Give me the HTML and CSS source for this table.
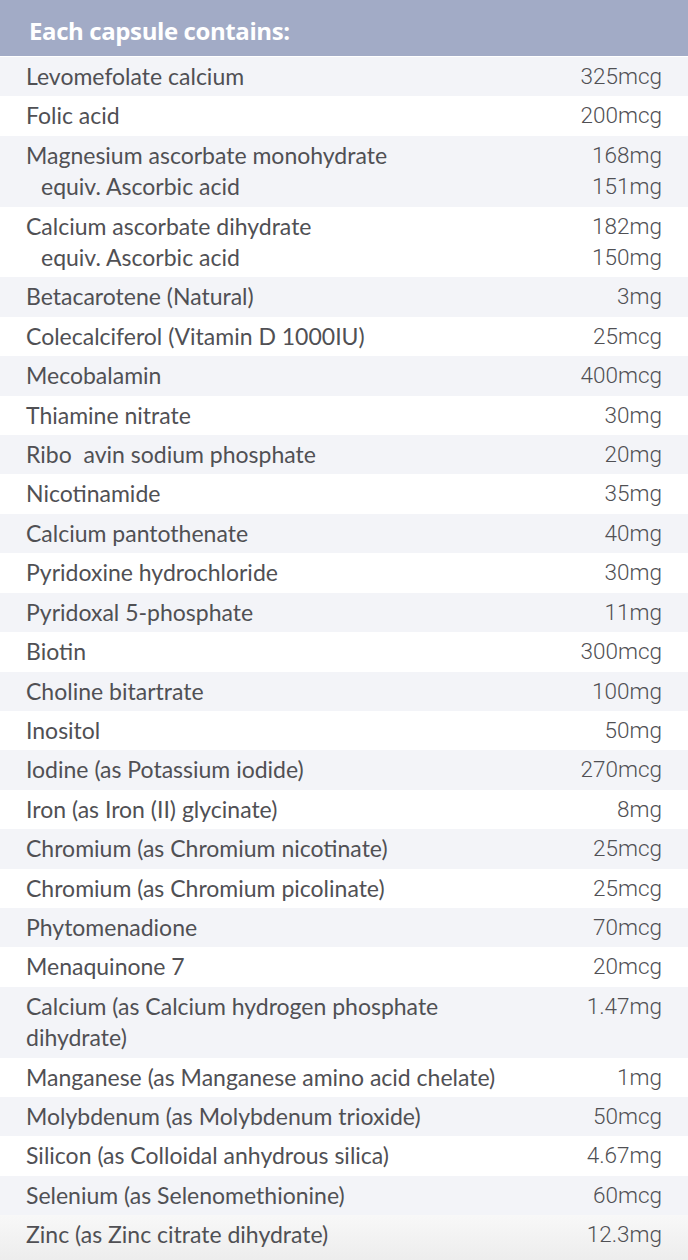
FILE: index.html
```html
<!DOCTYPE html>
<html>
<head>
<meta charset="utf-8">
<link rel="stylesheet" href="styles.css">
</head>
<body>
<div class="panel">
  <div class="header">Each capsule contains:</div>
  <div class="rows">
    <div class="row alt"><div class="name">Levomefolate calcium</div><div class="amt">325mcg</div></div>
    <div class="row"><div class="name">Folic acid</div><div class="amt">200mcg</div></div>
    <div class="row alt"><div class="name">Magnesium ascorbate monohydrate<br><span class="sub">equiv. Ascorbic acid</span></div><div class="amt">168mg<br>151mg</div></div>
    <div class="row"><div class="name">Calcium ascorbate dihydrate<br><span class="sub">equiv. Ascorbic acid</span></div><div class="amt">182mg<br>150mg</div></div>
    <div class="row alt"><div class="name">Betacarotene (Natural)</div><div class="amt">3mg</div></div>
    <div class="row"><div class="name">Colecalciferol (Vitamin D 1000IU)</div><div class="amt">25mcg</div></div>
    <div class="row alt"><div class="name">Mecobalamin</div><div class="amt">400mcg</div></div>
    <div class="row"><div class="name">Thiamine nitrate</div><div class="amt">30mg</div></div>
    <div class="row alt"><div class="name">Ribo&nbsp; avin sodium phosphate</div><div class="amt">20mg</div></div>
    <div class="row"><div class="name">Nicotinamide</div><div class="amt">35mg</div></div>
    <div class="row alt"><div class="name">Calcium pantothenate</div><div class="amt">40mg</div></div>
    <div class="row"><div class="name">Pyridoxine hydrochloride</div><div class="amt">30mg</div></div>
    <div class="row alt"><div class="name">Pyridoxal 5-phosphate</div><div class="amt">11mg</div></div>
    <div class="row"><div class="name">Biotin</div><div class="amt">300mcg</div></div>
    <div class="row alt"><div class="name">Choline bitartrate</div><div class="amt">100mg</div></div>
    <div class="row"><div class="name">Inositol</div><div class="amt">50mg</div></div>
    <div class="row alt"><div class="name">Iodine (as Potassium iodide)</div><div class="amt">270mcg</div></div>
    <div class="row"><div class="name">Iron (as Iron (II) glycinate)</div><div class="amt">8mg</div></div>
    <div class="row alt"><div class="name">Chromium (as Chromium nicotinate)</div><div class="amt">25mcg</div></div>
    <div class="row"><div class="name">Chromium (as Chromium picolinate)</div><div class="amt">25mcg</div></div>
    <div class="row alt"><div class="name">Phytomenadione</div><div class="amt">70mcg</div></div>
    <div class="row"><div class="name">Menaquinone 7</div><div class="amt">20mcg</div></div>
    <div class="row alt"><div class="name">Calcium (as Calcium hydrogen phosphate<br>dihydrate)</div><div class="amt">1.47mg</div></div>
    <div class="row"><div class="name">Manganese (as Manganese amino acid chelate)</div><div class="amt">1mg</div></div>
    <div class="row alt"><div class="name">Molybdenum (as Molybdenum trioxide)</div><div class="amt">50mcg</div></div>
    <div class="row"><div class="name">Silicon (as Colloidal anhydrous silica)</div><div class="amt">4.67mg</div></div>
    <div class="row alt"><div class="name">Selenium (as Selenomethionine)</div><div class="amt">60mcg</div></div>
    <div class="row last"><div class="name">Zinc (as Zinc citrate dihydrate)</div><div class="amt">12.3mg</div></div>
  </div>
</div>
</body>
</html>
```
FILE: styles.css
```css
html, body {
  margin: 0;
  padding: 0;
  background: #ffffff;
}
.panel {
  width: 688px;
  height: 1260px;
  overflow: hidden;
  font-family: "Lato", "Liberation Sans", sans-serif;
  color: #505054;
}
.header {
  height: 56px;
  background: #a2abc6;
  color: #ffffff;
  font-family: "Open Sans", "Liberation Sans", sans-serif;
  font-weight: 700;
  font-size: 24px;
  letter-spacing: -0.4px;
  line-height: 61px;
  padding-left: 29px;
  border-bottom: 1px solid #ffffff;
}
.rows {
  display: flex;
  flex-direction: column;
}
.row {
  display: flex;
  justify-content: space-between;
  align-items: flex-start;
  padding: 4px 26px 4px 26px;
  font-size: 23px;
  line-height: 31.4px;
  background: #ffffff;
}
.row.alt {
  background: #f3f4f8;
}
.row.last {
  background: linear-gradient(#f8f8f8, #ececec);
  padding-bottom: 12px;
}
.sub {
  padding-left: 15px;
}
.amt {
  text-align: right;
  font-family: "Roboto", "Liberation Sans", sans-serif;
  font-weight: 300;
  font-size: 22.5px;
}
```
